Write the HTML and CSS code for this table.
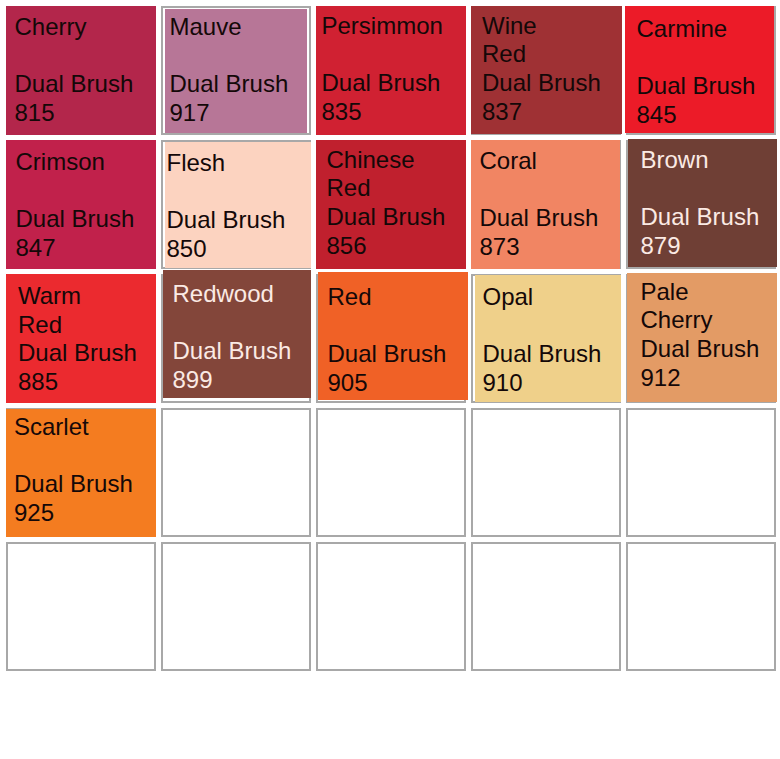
FILE: index.html
```html
<!DOCTYPE html>
<html lang="en">
<head>
<meta charset="utf-8">
<title>Dual Brush Reds</title>
<link rel="stylesheet" href="styles.css">
</head>
<body>
<div class="chart">
  <div class="cell"><div class="sw sw-cherry"><div class="name">Cherry</div><div>Dual Brush</div><div>815</div></div></div>
  <div class="cell"><div class="sw sw-mauve"><div class="name">Mauve</div><div>Dual Brush</div><div>917</div></div></div>
  <div class="cell"><div class="sw sw-persimmon"><div class="name">Persimmon</div><div>Dual Brush</div><div>835</div></div></div>
  <div class="cell"><div class="sw sw-wine"><div class="name">Wine<br>Red</div><div>Dual Brush</div><div>837</div></div></div>
  <div class="cell"><div class="sw sw-carmine"><div class="name">Carmine</div><div>Dual Brush</div><div>845</div></div></div>

  <div class="cell"><div class="sw sw-crimson"><div class="name">Crimson</div><div>Dual Brush</div><div>847</div></div></div>
  <div class="cell"><div class="sw sw-flesh"><div class="name">Flesh</div><div>Dual Brush</div><div>850</div></div></div>
  <div class="cell"><div class="sw sw-chinese"><div class="name">Chinese<br>Red</div><div>Dual Brush</div><div>856</div></div></div>
  <div class="cell"><div class="sw sw-coral"><div class="name">Coral</div><div>Dual Brush</div><div>873</div></div></div>
  <div class="cell"><div class="sw sw-brown light"><div class="name">Brown</div><div>Dual Brush</div><div>879</div></div></div>

  <div class="cell"><div class="sw sw-warm"><div class="name">Warm<br>Red</div><div>Dual Brush</div><div>885</div></div></div>
  <div class="cell"><div class="sw sw-redwood light"><div class="name">Redwood</div><div>Dual Brush</div><div>899</div></div></div>
  <div class="cell"><div class="sw sw-red"><div class="name">Red</div><div>Dual Brush</div><div>905</div></div></div>
  <div class="cell"><div class="sw sw-opal"><div class="name">Opal</div><div>Dual Brush</div><div>910</div></div></div>
  <div class="cell"><div class="sw sw-pale"><div class="name">Pale<br>Cherry</div><div>Dual Brush</div><div>912</div></div></div>

  <div class="cell"><div class="sw sw-scarlet"><div class="name">Scarlet</div><div>Dual Brush</div><div>925</div></div></div>
  <div class="cell"></div>
  <div class="cell"></div>
  <div class="cell"></div>
  <div class="cell"></div>

  <div class="cell"></div>
  <div class="cell"></div>
  <div class="cell"></div>
  <div class="cell"></div>
  <div class="cell"></div>
</div>
</body>
</html>
```

FILE: styles.css
```css
html, body {
  margin: 0;
  padding: 0;
  background: #ffffff;
}

body {
  font-family: "Liberation Sans", Arial, sans-serif;
  font-size: 24px;
  line-height: 28.7px;
  color: #140808;
}

.chart {
  display: grid;
  grid-template-columns: repeat(5, 150px);
  grid-auto-rows: 129px;
  gap: 5px;
  padding: 6px 0 0 6px;
}

.cell {
  box-sizing: border-box;
  border: 2px solid #a8a8a8;
  display: flex;
  background: #ffffff;
}

.sw {
  flex: 1;
  margin: -2px;
  white-space: nowrap;
}

.sw .name {
  min-height: 57.4px;
}

.light {
  color: #fbeae4;
}

.sw-cherry    { background: #b3264b; padding: 7px 0 0 8.5px; }
.sw-mauve     { background: #b77697; margin: 1px 2px 0 2px; padding: 3.5px 0 0 4.5px; }
.sw-persimmon { background: #d02132; padding: 5.5px 0 0 5.5px; }
.sw-wine      { background: #9f3134; margin: -2px -3px -1px -2px; padding: 5.5px 0 0 11px; }
.sw-carmine   { background: #ec1b28; margin: -2px 0 0 -3px; padding: 8.5px 0 0 11.5px; }

.sw-crimson   { background: #c1214b; padding: 7.5px 0 0 9.5px; }
.sw-flesh     { background: #fcd3c0; margin: 0 -2px -1px 2px; padding: 6.5px 0 0 1.5px; }
.sw-chinese   { background: #c0202e; padding: 5.5px 0 0 10.5px; }
.sw-coral     { background: #f18563; margin: -2px -1px -2px -2px; padding: 6.5px 0 0 8.5px; }
.sw-brown     { background: #6f3f35; margin: -3px -3px 0 0; padding: 6.5px 0 0 12.5px; }

.sw-warm      { background: #eb2a2f; padding: 8px 0 0 12px; }
.sw-redwood   { background: #83463a; margin: -6px -2px 3px 0; padding: 9.5px 0 0 9.5px; }
.sw-red       { background: #f06126; margin: -4px -4px 1px 0; padding: 10.5px 0 0 9.5px; }
.sw-opal      { background: #efd08a; margin: -1px -2px -1px 2px; padding: 7.5px 0 0 7.5px; }
.sw-pale      { background: #e39b65; margin: -3px -3px -1px -1px; padding: 4.5px 0 0 13.5px; }

.sw-scarlet   { background: #f47c20; margin: -1px -2px -2px -2px; padding: 3.5px 0 0 8px; }
```
